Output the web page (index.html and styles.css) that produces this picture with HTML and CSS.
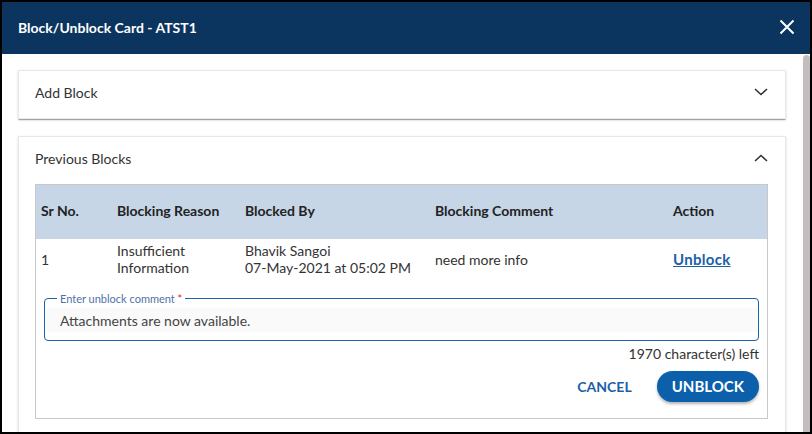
FILE: index.html
```html
<!DOCTYPE html>
<html lang="en">
<head>
<meta charset="utf-8">
<title>Block/Unblock Card</title>
<link rel="stylesheet" href="styles.css">
</head>
<body>
<div class="dialog">
  <div class="dlg-head">
    <span class="dlg-title">Block/Unblock Card - ATST1</span>
    <button class="close" aria-label="Close">
      <svg width="16" height="16" viewBox="0 0 16 16"><path d="M1.5 1.5 L14.5 14.5 M14.5 1.5 L1.5 14.5" stroke="#fff" stroke-width="2" fill="none"/></svg>
    </button>
  </div>
  <div class="dlg-body">
    <div class="content">
      <section class="panel">
        <div class="panel-head">
          <span>Add Block</span>
          <svg class="chev" width="14" height="8" viewBox="0 0 14 8"><path d="M1 1 L7 6.5 L13 1" stroke="#333" stroke-width="1.6" fill="none"/></svg>
        </div>
      </section>
      <section class="panel">
        <div class="panel-head">
          <span>Previous Blocks</span>
          <svg class="chev" width="14" height="8" viewBox="0 0 14 8"><path d="M1 7 L7 1.5 L13 7" stroke="#333" stroke-width="1.6" fill="none"/></svg>
        </div>
        <div class="panel-body">
          <div class="tbl">
            <div class="grid thead">
              <div>Sr No.</div>
              <div>Blocking Reason</div>
              <div>Blocked By</div>
              <div>Blocking Comment</div>
              <div>Action</div>
            </div>
            <div class="grid trow">
              <div>1</div>
              <div>Insufficient<br>Information</div>
              <div>Bhavik Sangoi<br>07-May-2021 at 05:02 PM</div>
              <div>need more info</div>
              <div><a href="#" class="link">Unblock</a></div>
            </div>
            <div class="unblock-form">
              <fieldset class="field">
                <legend>Enter unblock comment <span class="req">*</span></legend>
                <input class="inp" type="text" value="Attachments are now available.">
              </fieldset>
              <div class="count">1970 character(s) left</div>
              <div class="actions">
                <button class="btn-text">CANCEL</button>
                <button class="btn-primary">UNBLOCK</button>
              </div>
            </div>
          </div>
        </div>
      </section>
    </div>
    <div class="scrollbar"><div class="thumb"></div></div>
  </div>
</div>
</body>
</html>
```

FILE: styles.css
```css
* { box-sizing: border-box; }
html, body { margin: 0; padding: 0; height: 100%; }
body {
  background: #000;
  font-family: Lato, "Open Sans", "Liberation Sans", sans-serif;
  font-size: 14px;
  color: #333;
  overflow: hidden;
}
.dialog {
  margin: 2px;
  height: 430px;
  background: #fff;
  display: flex;
  flex-direction: column;
  overflow: hidden;
}
.dlg-head {
  height: 52px;
  flex: none;
  background: #0b345f;
  display: flex;
  align-items: center;
  justify-content: space-between;
  padding: 0 16px 2px 16px;
}
.dlg-title {
  color: #fff;
  font-weight: 700;
  font-size: 14px;
}
.close {
  background: none;
  border: 0;
  padding: 0;
  width: 16px;
  height: 16px;
  display: flex;
  margin-right: -1px;
}
.dlg-body {
  flex: 1;
  display: flex;
  min-height: 0;
}
.content {
  flex: 1;
  padding: 16px 16px 0 16px;
  display: flex;
  flex-direction: column;
  gap: 17px;
  overflow: hidden;
}
.scrollbar {
  width: 8px;
  flex: none;
  padding-top: 1px;
  background: #fff;
}
.thumb {
  height: 100%;
  background: #c3bdbd;
  border-radius: 4px 4px 0 0;
  margin-left: 1px;
}
.panel {
  flex: none;
  border: 1px solid #e8e8e8;
  background: #fff;
  box-shadow: 0 2px 1px -1px rgba(0,0,0,.22), 0 1px 1px rgba(0,0,0,.12), 0 1px 3px rgba(0,0,0,.1);
}
.panel-head {
  height: 47px;
  display: flex;
  align-items: center;
  justify-content: space-between;
  padding: 0 17px 5px 16px;
  color: #333;
}
.chev { display: block; }
.panel-body {
  padding: 0 17px 14px 16px;
}
.tbl {
  border: 1px solid #c8c8c8;
}
.grid {
  display: grid;
  grid-template-columns: 76px 128px 190px 238px 1fr;
  padding-left: 5px;
  align-items: center;
}
.thead {
  height: 54px;
  background: #c6d6e6;
  font-weight: 700;
  color: #222;
  padding-bottom: 4px;
}
.trow {
  height: 42px;
  line-height: 17px;
  color: #333;
  padding-bottom: 2px;
}
.link {
  color: #1b5fa6;
  font-weight: 700;
  font-size: 15px;
  letter-spacing: 0.3px;
  text-decoration: underline;
}
.unblock-form {
  padding: 0 8px 16px 8px;
}
.field {
  margin: 11px 0 0 0;
  padding: 0 0 8px 0;
  border: 1px solid #1a62ad;
  border-radius: 4px;
  min-width: 0;
}
.field legend {
  margin-left: 12px;
  padding: 0 3px;
  font-size: 11px;
  line-height: 13px;
  color: #4f72a6;
}
.req { color: #e02424; }
.inp {
  display: block;
  width: 100%;
  height: 24px;
  margin-top: 3px;
  border: 0;
  outline: none;
  background: #fafafa;
  padding: 0 15px;
  font-family: inherit;
  font-size: 14px;
  color: #444;
}
.count {
  text-align: right;
  margin-top: 4px;
  line-height: 18px;
  color: #333;
}
.actions {
  display: flex;
  justify-content: flex-end;
  align-items: center;
  gap: 9px;
  margin-top: 7px;
}
.btn-text {
  background: none;
  border: 0;
  height: 32px;
  padding: 0 16px;
  font-family: inherit;
  font-weight: 700;
  font-size: 14px;
  color: #1b5fa6;
}
.btn-primary {
  height: 31px;
  padding: 0 15px;
  border: 0;
  border-radius: 16px;
  background: #0b5fab;
  color: #fff;
  font-family: inherit;
  font-weight: 700;
  font-size: 15px;
  box-shadow: 0 2px 3px rgba(0,0,0,.3);
}
```
